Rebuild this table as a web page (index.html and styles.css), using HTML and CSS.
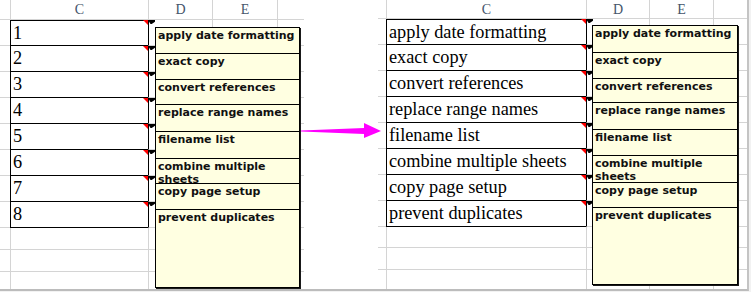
FILE: index.html
```html
<!DOCTYPE html>
<html lang="en">
<head>
    <meta charset="UTF-8">
    <title>Comments to cells</title>
    <link rel="stylesheet" href="styles.css">
</head>
<body>
    <div class="shot">
        <!-- before: numbers with comments -->
        <div class="sheet sheet-left">
            <div class="grid">
                <div class="cell m"></div><div class="cell hd">C</div><div class="cell hd">D</div><div class="cell hd">E</div><div class="cell"></div>

                <div class="cell m"></div><div class="cell val top">1</div><div class="cell edge"></div><div class="cell"></div><div class="cell"></div>
                <div class="cell m"></div><div class="cell val">2</div><div class="cell edge"></div><div class="cell"></div><div class="cell"></div>
                <div class="cell m"></div><div class="cell val">3</div><div class="cell edge"></div><div class="cell"></div><div class="cell"></div>
                <div class="cell m"></div><div class="cell val">4</div><div class="cell edge"></div><div class="cell"></div><div class="cell"></div>
                <div class="cell m"></div><div class="cell val">5</div><div class="cell edge"></div><div class="cell"></div><div class="cell"></div>
                <div class="cell m"></div><div class="cell val">6</div><div class="cell edge"></div><div class="cell"></div><div class="cell"></div>
                <div class="cell m"></div><div class="cell val">7</div><div class="cell edge"></div><div class="cell"></div><div class="cell"></div>
                <div class="cell m"></div><div class="cell val">8</div><div class="cell edge"></div><div class="cell"></div><div class="cell"></div>

                <div class="cell m"></div><div class="cell"></div><div class="cell"></div><div class="cell"></div><div class="cell"></div>
                <div class="cell m"></div><div class="cell"></div><div class="cell"></div><div class="cell"></div><div class="cell"></div>
                <div class="cell m end"></div><div class="cell end"></div><div class="cell end"></div><div class="cell end"></div><div class="cell end"></div>
            </div>
            <div class="comments">
                <div class="note">apply date formatting</div>
                <div class="note">exact copy</div>
                <div class="note">convert references</div>
                <div class="note">replace range names</div>
                <div class="note">filename list</div>
                <div class="note">combine multiple sheets</div>
                <div class="note">copy page setup</div>
                <div class="note">prevent duplicates</div>
            </div>
        </div>

        <svg class="arrow" width="84" height="20" viewBox="0 0 84 20">
            <polygon points="2,9.6 65,7 65,2 82,10 65,17 65,13 2,10.4" fill="#ff00ff"/>
        </svg>

        <!-- after: comment text copied into cells -->
        <div class="sheet sheet-right">
            <div class="grid">
                <div class="cell m"></div><div class="cell hd">C</div><div class="cell hd">D</div><div class="cell hd">E</div><div class="cell"></div>

                <div class="cell m"></div><div class="cell val top">apply date formatting</div><div class="cell edge"></div><div class="cell"></div><div class="cell"></div>
                <div class="cell m"></div><div class="cell val">exact copy</div><div class="cell edge"></div><div class="cell"></div><div class="cell"></div>
                <div class="cell m"></div><div class="cell val">convert references</div><div class="cell edge"></div><div class="cell"></div><div class="cell"></div>
                <div class="cell m"></div><div class="cell val">replace range names</div><div class="cell edge"></div><div class="cell"></div><div class="cell"></div>
                <div class="cell m"></div><div class="cell val">filename list</div><div class="cell edge"></div><div class="cell"></div><div class="cell"></div>
                <div class="cell m"></div><div class="cell val">combine multiple sheets</div><div class="cell edge"></div><div class="cell"></div><div class="cell"></div>
                <div class="cell m"></div><div class="cell val">copy page setup</div><div class="cell edge"></div><div class="cell"></div><div class="cell"></div>
                <div class="cell m"></div><div class="cell val">prevent duplicates</div><div class="cell edge"></div><div class="cell"></div><div class="cell"></div>

                <div class="cell m"></div><div class="cell"></div><div class="cell"></div><div class="cell"></div><div class="cell"></div>
                <div class="cell m"></div><div class="cell"></div><div class="cell"></div><div class="cell"></div><div class="cell"></div>
                <div class="cell m end"></div><div class="cell end"></div><div class="cell end"></div><div class="cell end"></div><div class="cell end"></div>
            </div>
            <div class="comments">
                <div class="note">apply date formatting</div>
                <div class="note">exact copy</div>
                <div class="note">convert references</div>
                <div class="note">replace range names</div>
                <div class="note">filename list</div>
                <div class="note">combine multiple sheets</div>
                <div class="note">copy page setup</div>
                <div class="note">prevent duplicates</div>
            </div>
        </div>
    </div>
</body>
</html>
```

FILE: styles.css
```css
body {
    margin: 0;
    background: #f2f2f2;
}
.shot {
    position: relative;
    display: flex;
    gap: 74px;
    width: 747px;
    height: 289px;
    background: #fff;
    border-right: 2px solid #c4c4c4;
    border-bottom: 2px solid #bcbcbc;
}
.sheet {
    position: relative;
    height: 100%;
}
.sheet-left {
    width: 304px;
}
.sheet-right {
    width: 369px;
}
.grid {
    display: grid;
    height: 100%;
}
.sheet-left .grid {
    grid-template-columns: 10px 138px 64px 65px 27px;
    grid-template-rows: 20px repeat(8, 26px) 22px 22px 1fr;
}
.sheet-right .grid {
    grid-template-columns: 8px 200px 63px 64px 34px;
    grid-template-rows: 19px repeat(8, 26px) 21px 22px 1fr;
}
.cell {
    box-sizing: border-box;
    border-left: 1px solid #d4d4d4;
    border-bottom: 1px solid #d4d4d4;
    min-width: 0;
}
.cell.m {
    border-left: none;
}
.cell.end {
    border-bottom: none;
}
.hd {
    text-align: center;
    font-family: "Liberation Serif", serif;
    font-size: 14px;
    line-height: 20px;
    color: #44546a;
}
.val {
    position: relative;
    border-left-color: #000;
    border-bottom-color: #000;
    padding-left: 2px;
    font-family: "Liberation Serif", serif;
    font-size: 18.3px;
    line-height: 24px;
    color: #000;
    white-space: nowrap;
}
.val.top {
    border-top: 1px solid #000;
}
.edge {
    border-left-color: #000;
}
/* red comment marker */
.val::before {
    content: "";
    position: absolute;
    top: 0;
    right: 0;
    width: 5px;
    height: 5px;
    background: #ff0000;
    clip-path: polygon(0 0, 100% 0, 100% 100%);
}
.val.top::before {
    top: -1px;
}
/* leader of the comment box */
.val::after {
    content: "";
    position: absolute;
    top: 0;
    left: calc(100% + 1px);
    width: 6px;
    height: 4px;
    background: #000;
    clip-path: polygon(0 0, 100% 0, 100% 45%, 45% 100%, 25% 100%, 0 40%);
}
.val.top::after {
    top: -1px;
}
.comments {
    position: absolute;
    box-sizing: border-box;
    display: grid;
    background: #ffffe1;
    border: 1px solid #000;
    box-shadow: 1px 1px 0 #1a1a1a;
    font-family: "DejaVu Sans", sans-serif;
    font-weight: bold;
    font-size: 11px;
    line-height: 13px;
    color: #111;
}
.sheet-left .comments {
    left: 155px;
    top: 27px;
    width: 145px;
    height: 261px;
    grid-template-rows: 25px 26px 25px 27px 27px 25px 26px 1fr;
}
.sheet-right .comments {
    left: 214px;
    top: 25px;
    width: 146px;
    height: 260px;
    grid-template-rows: 26px 26px 24px 27px 26px 27px 25px 1fr;
}
.note {
    overflow: hidden;
    padding: 1px 2px 0;
    border-top: 1px solid #000;
}
.note:first-child {
    border-top: none;
}
.arrow {
    position: absolute;
    left: 299px;
    top: 121px;
}
```
